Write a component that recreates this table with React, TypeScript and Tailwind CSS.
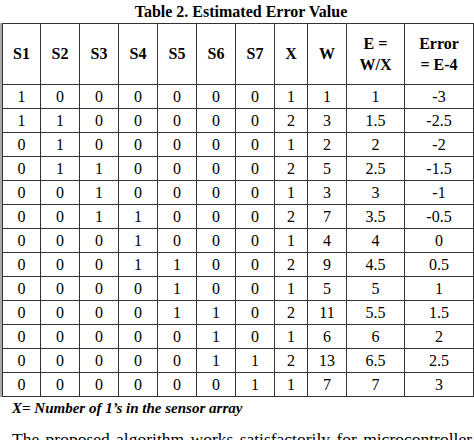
import React from "react";

const rows: (string | number)[][] = [
  [1, 0, 0, 0, 0, 0, 0, 1, 1, "1", "-3"],
  [1, 1, 0, 0, 0, 0, 0, 2, 3, "1.5", "-2.5"],
  [0, 1, 0, 0, 0, 0, 0, 1, 2, "2", "-2"],
  [0, 1, 1, 0, 0, 0, 0, 2, 5, "2.5", "-1.5"],
  [0, 0, 1, 0, 0, 0, 0, 1, 3, "3", "-1"],
  [0, 0, 1, 1, 0, 0, 0, 2, 7, "3.5", "-0.5"],
  [0, 0, 0, 1, 0, 0, 0, 1, 4, "4", "0"],
  [0, 0, 0, 1, 1, 0, 0, 2, 9, "4.5", "0.5"],
  [0, 0, 0, 0, 1, 0, 0, 1, 5, "5", "1"],
  [0, 0, 0, 0, 1, 1, 0, 2, 11, "5.5", "1.5"],
  [0, 0, 0, 0, 0, 1, 0, 1, 6, "6", "2"],
  [0, 0, 0, 0, 0, 1, 1, 2, 13, "6.5", "2.5"],
  [0, 0, 0, 0, 0, 0, 1, 1, 7, "7", "3"],
];

const heads = ["S1", "S2", "S3", "S4", "S5", "S6", "S7", "X", "W"];

export default function App() {
  return (
    <div className="w-[474px] h-[440px] overflow-hidden bg-white text-black font-['Liberation_Serif','Times_New_Roman',serif]">
      <div className="h-[23px] flex items-center justify-center pl-[8px] text-[16px] font-bold leading-none">
        Table 2. Estimated Error Value
      </div>
      <div className="flex">
        <div className="w-[2px] bg-[#aaa]" />
        <table className="table-fixed border-collapse w-[471px]">
          <colgroup>
            <col className="w-[38px]" />
            <col className="w-[39px]" />
            <col className="w-[39px]" />
            <col className="w-[39px]" />
            <col className="w-[39px]" />
            <col className="w-[39px]" />
            <col className="w-[39px]" />
            <col className="w-[33px]" />
            <col className="w-[39px]" />
            <col className="w-[58px]" />
            <col className="w-[69px]" />
          </colgroup>
          <thead>
            <tr className="h-[61px]">
              {heads.map((h) => (
                <th
                  key={h}
                  className="border-[1.5px] border-[#333] text-[16px] font-bold text-center p-0 leading-none"
                >
                  {h}
                </th>
              ))}
              <th className="border-[1.5px] border-[#333] text-[16px] font-bold text-center p-0 leading-[21px]">
                E =<br />W/X
              </th>
              <th className="border-[1.5px] border-[#333] text-[16px] font-bold text-center p-0 leading-[21px]">
                Error<br />= E-4
              </th>
            </tr>
          </thead>
          <tbody>
            {rows.map((r, i) => (
              <tr key={i} className="h-[24px]">
                {r.map((c, j) => (
                  <td
                    key={j}
                    className="border-[1.5px] border-[#333] text-[16px] text-center p-0 leading-none"
                  >
                    {c}
                  </td>
                ))}
              </tr>
            ))}
          </tbody>
        </table>
      </div>
      <div className="pl-[12px] pt-[2px] text-[15px] font-bold italic leading-[18px]">
        X= Number of 1’s in the sensor array
      </div>
      <div className="mt-[11px] pl-[12px] pr-[2px] text-[17.5px] leading-[22px] text-justify [text-align-last:justify]">
        The proposed algorithm works satisfactorily for microcontroller
      </div>
    </div>
  );
}
